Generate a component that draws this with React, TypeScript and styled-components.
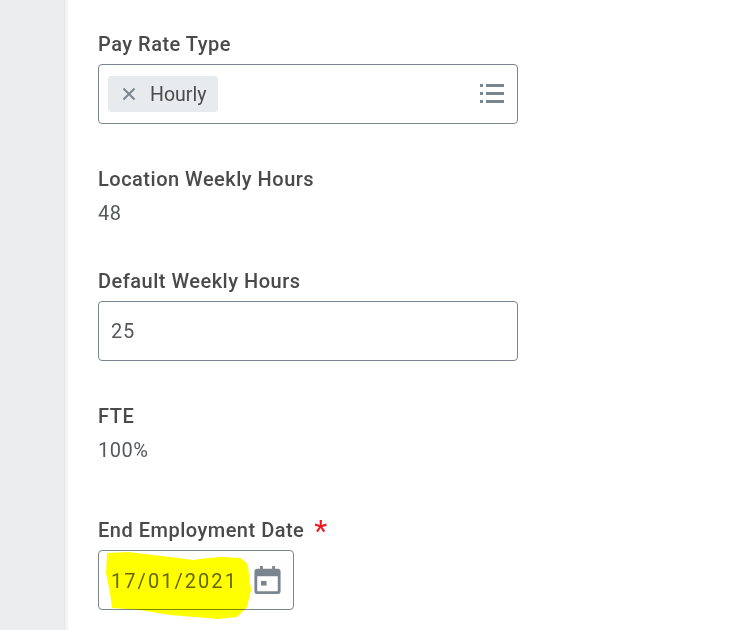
import { createGlobalStyle } from "styled-components"
import styled from "styled-components"

const Global = createGlobalStyle`
  html, body { margin: 0; padding: 0; background: #fff; }
  body { font-family: Roboto, "Liberation Sans", sans-serif; color: #4a4a4a; overflow: hidden; }
`

const Page = styled.div`
  display: flex;
  width: 756px;
  height: 630px;
  overflow: hidden;
`
const Rail = styled.div`
  width: 65px;
  background: #ecedef;
  border-right: 1px solid #e6e7e9;
  box-sizing: border-box;
  flex-shrink: 0;
`
const Sheet = styled.div`
  flex: 1;
  padding: 32px 0 0 30px;
  border-left: 3px solid #f3f4f5;
  display: flex;
  flex-direction: column;
`
const Field = styled.div<{ $gap: number }>`
  margin-bottom: ${(p) => p.$gap}px;
`
const Label = styled.div`
  height: 24px;
  font-size: 20px;
  line-height: 24px;
  font-weight: 500;
  letter-spacing: 0.5px;
  color: #4a4a4a;
  margin-bottom: 8px;
`
const Required = styled.span`
  color: #f0141b;
  font-size: 30px;
  line-height: 24px;
  font-weight: 400;
  letter-spacing: 0;
  margin-left: 10px;
  vertical-align: -4px;
`
const Value = styled.div`
  font-size: 20px;
  line-height: 24px;
  letter-spacing: 0.5px;
  color: #565a5e;
  padding-top: 2px;
`
const Box = styled.div<{ $width: number }>`
  position: relative;
  box-sizing: border-box;
  width: ${(p) => p.$width}px;
  height: 60px;
  border: 1px solid #7b858f;
  border-radius: 4px;
  display: flex;
  align-items: center;
  justify-content: space-between;
  padding: 0 9px;
  font-size: 20px;
  color: #54585c;
`
const PlainValue = styled.span`
  padding-left: 3px;
  letter-spacing: 0.8px;
`
const DateValue = styled.span`
  padding: 1px 0 0 3px;
  letter-spacing: 2.05px;
  color: #66665e;
`
const Pill = styled.div`
  display: flex;
  align-items: center;
  gap: 14px;
  height: 36px;
  padding: 0 12px 0 14px;
  background: #e8ebed;
  border-radius: 3px;
  font-size: 19.5px;
  color: #4a4a4a;
`
const Marker = styled.svg`
  position: absolute;
  left: -1px;
  top: -1px;
  width: 196px;
  height: 80px;
  mix-blend-mode: multiply;
  pointer-events: none;
`

export default function App() {
  return (
    <Page>
      <Global />
      <Rail />
      <Sheet>
        <Field $gap={43}>
          <Label>Pay Rate Type</Label>
          <Box $width={420}>
            <Pill>
              <svg width="14" height="14" viewBox="0 0 14 14">
                <path d="M1.5 1.5 12.5 12.5M12.5 1.5 1.5 12.5" stroke="#7b858f" strokeWidth="2" />
              </svg>
              Hourly
            </Pill>
            <svg width="26" height="20" viewBox="0 0 26 20" style={{ marginRight: 2 }}>
              <path
                d="M0 0h3v3H0zM6 0h18v3H6zM0 8h3v3H0zM6 8h18v3H6zM0 16h3v3H0zM6 16h18v3H6z"
                fill="#7b858f"
              />
            </svg>
          </Box>
        </Field>
        <Field $gap={44}>
          <Label>Location Weekly Hours</Label>
          <Value>48</Value>
        </Field>
        <Field $gap={43}>
          <Label>Default Weekly Hours</Label>
          <Box $width={420}>
            <PlainValue>25</PlainValue>
          </Box>
        </Field>
        <Field $gap={56}>
          <Label>FTE</Label>
          <Value>100%</Value>
        </Field>
        <Field $gap={0}>
          <Label>
            End Employment Date<Required>*</Required>
          </Label>
          <Box $width={196}>
            <DateValue>17/01/2021</DateValue>
            <svg width="27" height="28" viewBox="0 0 28 30" style={{ position: "relative", left: -3, flexShrink: 0 }}>
              <path
                d="M6 0h3v3h10V0h3v3h3a3 3 0 0 1 3 3v21a3 3 0 0 1-3 3H3a3 3 0 0 1-3-3V6a3 3 0 0 1 3-3h3zM3 11v16h22V11z"
                fill="#7b858f"
                fillRule="evenodd"
              />
              <path d="M7 16h6v5H7z" fill="#7b858f" />
            </svg>
            <Marker viewBox="0 0 196 80">
              <path
                d="M9 3 30 2 55 5 72 7 95 10 110 8 122 7 142 8 148 12 150 17 153 40 149 57 139 67 120 69 109 68 72 65 42 60 14 58 12 43 8 23Z"
                fill="#ffff00"
              />
            </Marker>
          </Box>
        </Field>
      </Sheet>
    </Page>
  )
}
